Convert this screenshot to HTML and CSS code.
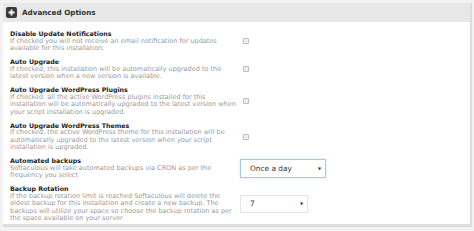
FILE: index.html
```html
<!DOCTYPE html>
<html lang="en">
  <head>
    <title>Advanced Options</title>
    <meta charset="UTF-8">
    <link rel="stylesheet" href="styles.css">
  </head>
  <body>
    <div class="panel">
      <div class="panel-head">
        <span class="toggle">
          <svg width="11" height="11" viewBox="0 0 11 11"><rect width="11" height="11" rx="2" fill="#3a3a3a"/><path d="M5.5 2.5v6M2.5 5.5h6" stroke="#fff" stroke-width="1.8"/></svg>
        </span>
        <span class="panel-title">Advanced Options</span>
      </div>
      <div class="options">
        <div class="label">
          <div class="name">Disable Update Notifications</div>
          <div class="desc">If checked you will not receive an email notification for updates available for this installation.</div>
        </div>
        <div class="control"><input type="checkbox"></div>

        <div class="label">
          <div class="name">Auto Upgrade</div>
          <div class="desc">If checked, this installation will be automatically upgraded to the latest version when a new version is available.</div>
        </div>
        <div class="control"><input type="checkbox"></div>

        <div class="label">
          <div class="name">Auto Upgrade WordPress Plugins</div>
          <div class="desc">If checked, all the active WordPress plugins installed for this installation will be automatically upgraded to the latest version when your script installation is upgraded.</div>
        </div>
        <div class="control"><input type="checkbox"></div>

        <div class="label">
          <div class="name">Auto Upgrade WordPress Themes</div>
          <div class="desc">If checked, the active WordPress theme for this installation will be automatically upgraded to the latest version when your script installation is upgraded.</div>
        </div>
        <div class="control"><input type="checkbox"></div>

        <div class="label">
          <div class="name">Automated backups</div>
          <div class="desc">Softaculous will take automated backups via CRON as per the frequency you select</div>
        </div>
        <div class="control">
          <div class="select focused"><span>Once a day</span><span class="arrow">&#9660;</span></div>
        </div>

        <div class="label">
          <div class="name">Backup Rotation</div>
          <div class="desc">If the backup rotation limit is reached Softaculous will delete the oldest backup for this installation and create a new backup. The backups will utilize your space so choose the backup rotation as per the space available on your server</div>
        </div>
        <div class="control">
          <div class="select small"><span>7</span><span class="arrow">&#9660;</span></div>
        </div>
      </div>
    </div>
  </body>
</html>
```

FILE: styles.css
```css
body {
  margin: 0;
  background: #f2f2f2;
  font-family: "DejaVu Sans", Verdana, sans-serif;
}

.panel {
  margin: 3px 2px 0 3px;
  height: 224px;
  box-sizing: border-box;
  background: #fff;
  border-right: 2px solid #ddd;
  border-bottom: 3px solid #ddd;
}

.panel-head {
  background: #e8e8e8;
  height: 19px;
  display: flex;
  align-items: center;
  padding-left: 3px;
}

.toggle {
  display: flex;
  margin-right: 5px;
}

.panel-title {
  font-size: 7.2px;
  font-weight: bold;
  color: #333;
}

.options {
  display: grid;
  grid-template-columns: 229px 1fr;
  align-items: center;
  row-gap: 5.5px;
  padding: 8px 0 0 7px;
}

.name {
  font-size: 6.3px;
  font-weight: bold;
  color: #222;
  line-height: 7.5px;
}

.desc {
  font-size: 6.5px;
  color: #9a9a9a;
  line-height: 7.5px;
}

.control input {
  appearance: none;
  display: block;
  margin: 0 0 0 4px;
  width: 6px;
  height: 6px;
  border: 1px solid #bdbdbd;
  border-radius: 1px;
  background: #f0f0f0;
}

.select {
  margin-left: 1px;
  display: flex;
  justify-content: space-between;
  align-items: center;
  box-sizing: border-box;
  height: 19px;
  width: 86px;
  padding: 0 4px 0 9px;
  font-size: 7.4px;
  color: #333;
  border: 1px solid #e4e4e4;
  background: #fff;
}

.select.focused {
  border-color: #a8c8e8;
  box-shadow: 0 0 2px #cfe0f2;
}

.select.small {
  width: 68px;
  height: 18px;
}

.arrow {
  font-size: 4px;
}
```
